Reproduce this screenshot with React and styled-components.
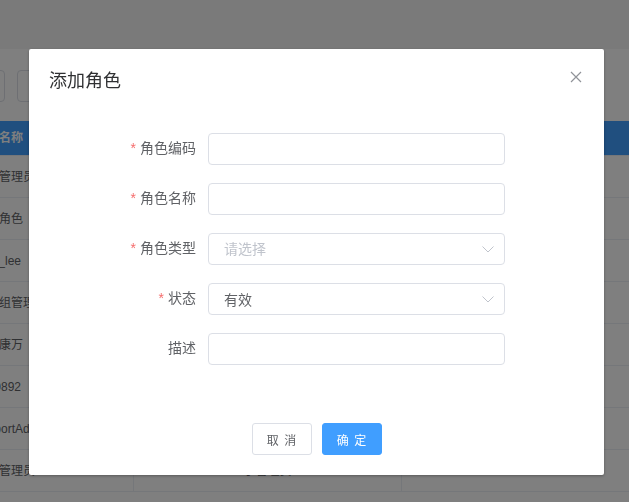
import React from "react";
import styled, { createGlobalStyle } from "styled-components";

const GlobalStyle = createGlobalStyle`
  html, body { margin: 0; padding: 0; }
  body {
    font-family: "Liberation Sans", "Noto Sans CJK SC", sans-serif;
    background: #fff;
  }
  * { box-sizing: border-box; }
`;

const Page = styled.div`
  width: 629px;
  height: 502px;
  overflow: hidden;
  background: #fff;
  position: relative;
`;

const TopBand = styled.div`
  height: 49px;
  background: #f4f4f5;
`;

const Toolbar = styled.div`
  display: flex;
  gap: 12px;
  margin: 21px 0 0 -60px;
  height: 32px;
`;

const ToolButton = styled.div`
  width: 65px;
  height: 32px;
  border: 1px solid #dcdfe6;
  border-radius: 4px;
  background: #fff;
`;

const Table = styled.div`
  margin-top: 19px;
  display: flex;
  flex-direction: column;
  font-size: 12px;
  color: #606266;
`;

const Row = styled.div`
  display: grid;
  grid-template-columns: 134px 268px 1fr;
  height: ${(p) => (p.$head ? 35 : 42)}px;
  background: ${(p) => (p.$head ? "#409eff" : "#fff")};
  color: ${(p) => (p.$head ? "#fff" : "#606266")};
  font-weight: ${(p) => (p.$head ? 700 : 400)};
  border-bottom: 1px solid #ebeef5;
`;

const Cell = styled.div`
  display: flex;
  align-items: center;
  justify-content: ${(p) => (p.$first ? "flex-start" : "center")};
  margin-left: ${(p) => (p.$first ? "-25px" : "0")};
  white-space: nowrap;
  border-right: ${(p) => (p.$last ? "none" : "1px solid #ebeef5")};
  line-height: 20px;
`;

const Overlay = styled.div`
  position: fixed;
  inset: 0;
  background: rgba(0, 0, 0, 0.5);
`;

const DialogWrap = styled.div`
  position: fixed;
  inset: 0;
  display: flex;
  align-items: flex-start;
`;

const Dialog = styled.div`
  margin: 49px 0 0 29px;
  width: 575px;
  background: #fff;
  border-radius: 2px;
  box-shadow: 0 1px 3px rgba(0, 0, 0, 0.3);
`;

const Header = styled.div`
  position: relative;
  padding: 20px 20px 10px;
`;

const Title = styled.span`
  font-size: 18px;
  line-height: 24px;
  color: #303133;
  display: block;
  height: 24px;
`;

const CloseBtn = styled.button`
  position: absolute;
  top: 20px;
  right: 20px;
  width: 16px;
  height: 16px;
  padding: 0;
  border: none;
  background: transparent;
  display: flex;
  align-items: center;
  justify-content: center;
  cursor: pointer;
`;

const Body = styled.div`
  padding: 30px 20px;
`;

const Form = styled.form`
  margin-left: 59px;
  width: 397px;
  display: flex;
  flex-direction: column;
  gap: 18px;
  padding-bottom: 18px;
`;

const FormItem = styled.div`
  display: flex;
  height: 32px;
`;

const Label = styled.label`
  width: 100px;
  padding-right: 12px;
  text-align: right;
  font-size: 14px;
  line-height: 31px;
  color: #606266;
  white-space: nowrap;
  &::before {
    content: ${(p) => (p.$required ? "'*'" : "none")};
    color: #f56c6c;
    margin-right: 4px;
  }
`;

const Control = styled.div`
  position: relative;
  width: 297px;
  height: 32px;
`;

const Input = styled.input`
  width: 100%;
  height: 32px;
  border: 1px solid #dcdfe6;
  border-radius: 4px;
  padding: 0 ${(p) => (p.$select ? "30px" : "15px")} 0 15px;
  font-family: inherit;
  font-size: 14px;
  color: #606266;
  background: #fff;
  outline: none;
  &::placeholder {
    color: #c0c4cc;
  }
`;

const Arrow = styled.span`
  position: absolute;
  right: 5px;
  top: 0;
  width: 25px;
  height: 32px;
  display: flex;
  align-items: center;
  justify-content: center;
  pointer-events: none;
`;

const Footer = styled.div`
  padding: 10px 20px 20px;
  display: flex;
  justify-content: center;
  gap: 10px;
`;

const Button = styled.button`
  width: 60px;
  height: 32px;
  padding: 0 0 0 1px;
  border-radius: 3px;
  font-family: inherit;
  font-size: 12px;
  letter-spacing: 1px;
  border: 1px solid ${(p) => (p.$primary ? "#409eff" : "#dcdfe6")};
  background: ${(p) => (p.$primary ? "#409eff" : "#fff")};
  color: ${(p) => (p.$primary ? "#fff" : "#606266")};
  cursor: pointer;
`;

const rows = [
  ["超级管理员", "系统角色", "2019-08-06 09:48:51"],
  ["普通角色", "业务角色", "2019-08-06 09:48:51"],
  ["user_lee", "业务角色", "2019-08-06 09:48:51"],
  ["项目组管理员", "业务角色", "2019-08-06 09:48:51"],
  ["测试康万", "业务角色", "2019-08-06 09:48:51"],
  ["test0892", "业务角色", "2019-08-06 09:48:51"],
  ["supportAdmin", "系统角色", "2019-08-06 09:48:51"],
  ["超级管理员", "子管理员", "2019-08-06 09:48:51"],
];

const ChevronDown = () => (
  <svg width="12" height="7" viewBox="0 0 12 7" fill="none">
    <polyline points="0.5,0.5 6,6 11.5,0.5" stroke="#c0c4cc" strokeWidth="1" />
  </svg>
);

const CloseIcon = () => (
  <svg width="12" height="12" viewBox="0 0 12 12" fill="none">
    <path d="M1 1L11 11M11 1L1 11" stroke="#909399" strokeWidth="1.2" />
  </svg>
);

const fields = [
  { label: "角色编码", required: true },
  { label: "角色名称", required: true },
  { label: "角色类型", required: true, select: true, placeholder: "请选择" },
  { label: "状态", required: true, select: true, value: "有效" },
  { label: "描述", required: false },
];

export default function App() {
  return (
    <>
      <GlobalStyle />
      <Page>
        <TopBand />
        <Toolbar>
          <ToolButton />
          <ToolButton />
          <ToolButton />
        </Toolbar>
        <Table>
          <Row $head>
            <Cell $first>角色名称</Cell>
            <Cell>角色类型</Cell>
            <Cell $last>创建时间</Cell>
          </Row>
          {rows.map((r, i) => (
            <Row key={i}>
              <Cell $first>{r[0]}</Cell>
              <Cell>{r[1]}</Cell>
              <Cell $last>{r[2]}</Cell>
            </Row>
          ))}
        </Table>
        <Overlay />
        <DialogWrap>
          <Dialog>
            <Header>
              <Title>添加角色</Title>
              <CloseBtn type="button" aria-label="Close">
                <CloseIcon />
              </CloseBtn>
            </Header>
            <Body>
              <Form onSubmit={(e) => e.preventDefault()}>
                {fields.map((f) => (
                  <FormItem key={f.label}>
                    <Label $required={f.required}>{f.label}</Label>
                    <Control>
                      <Input
                        $select={f.select}
                        readOnly={f.select}
                        placeholder={f.placeholder || ""}
                        defaultValue={f.value || ""}
                      />
                      {f.select && (
                        <Arrow>
                          <ChevronDown />
                        </Arrow>
                      )}
                    </Control>
                  </FormItem>
                ))}
              </Form>
            </Body>
            <Footer>
              <Button type="button">取 消</Button>
              <Button type="button" $primary>
                确 定
              </Button>
            </Footer>
          </Dialog>
        </DialogWrap>
      </Page>
    </>
  );
}
